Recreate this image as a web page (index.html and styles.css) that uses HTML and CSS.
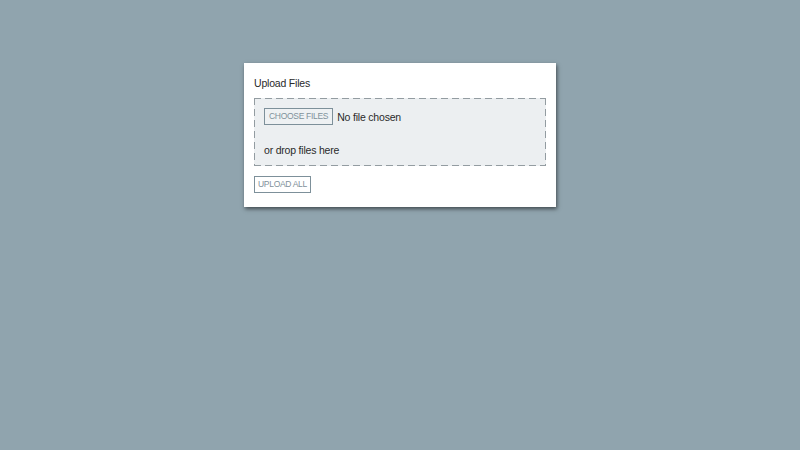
FILE: index.html
```html
<!DOCTYPE html>
<html lang="en">
<head>
<meta charset="utf-8">
<title>Upload Files</title>
<link rel="stylesheet" href="styles.css">
</head>
<body>
<main class="page">
  <section class="card">
    <h1 class="card-title">Upload Files</h1>
    <div class="dropzone">
      <div class="file-row">
        <span class="btn btn-choose">CHOOSE FILES</span>
        <span class="file-status">No file chosen</span>
      </div>
      <p class="drop-hint">or drop files here</p>
    </div>
    <span class="btn btn-upload">UPLOAD ALL</span>
  </section>
</main>
</body>
</html>
```

FILE: styles.css
```css
html, body {
  margin: 0;
  padding: 0;
}
body {
  background: #90a4ae;
  font-family: "Liberation Sans", Arial, Helvetica, sans-serif;
  color: #2a2a2a;
  width: 800px;
  height: 450px;
  overflow: hidden;
}
.page {
  display: flex;
  justify-content: center;
  padding-top: 63px;
}
.card {
  width: 312px;
  box-sizing: border-box;
  background: #fff;
  padding: 14px 10px 14px;
  box-shadow: 1px 2px 4px rgba(0, 0, 0, 0.55);
  display: flex;
  flex-direction: column;
  align-items: flex-start;
}
.card-title,
.file-status,
.drop-hint {
  font-size: 10.5px;
  line-height: 12px;
  letter-spacing: -0.2px;
  font-weight: normal;
}
.card-title {
  margin: 0 0 9px;
}
.dropzone {
  align-self: stretch;
  border: 1px solid transparent;
  padding: 9px;
  background:
    linear-gradient(to right, #939ca1 7px, transparent 7px) left top / 11px 1px repeat-x border-box,
    linear-gradient(to right, #939ca1 7px, transparent 7px) left bottom / 11px 1px repeat-x border-box,
    linear-gradient(to bottom, #939ca1 7px, transparent 7px) left top / 1px 11px repeat-y border-box,
    linear-gradient(to bottom, #939ca1 7px, transparent 7px) right top / 1px 11px repeat-y border-box,
    #eceff1 border-box;
}
.file-row {
  display: flex;
  align-items: center;
  gap: 4px;
}
.btn {
  display: inline-block;
  font-size: 8.5px;
  line-height: 9px;
  letter-spacing: -0.3px;
  color: #7f919b;
  border: 1px solid #7d909a;
  background: transparent;
  white-space: nowrap;
}
.btn-choose {
  padding: 3px 4px;
  background: #eef1f3;
}
.drop-hint {
  margin: 19px 0 0;
}
.btn-upload {
  margin-top: 10px;
  padding: 3px 3px;
}
```
